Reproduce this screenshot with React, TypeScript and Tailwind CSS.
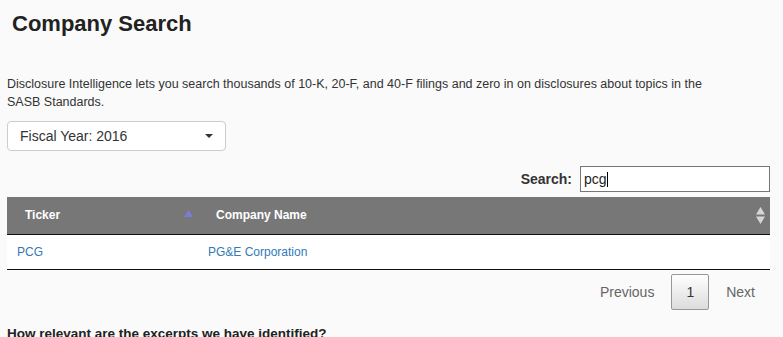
import React from "react";

const SortUp = () => (
  <svg width="9" height="8" viewBox="0 0 9 8" className="block">
    <path d="M4.5 0 L9 7 L0 7 Z" fill="#7b7bd9" />
  </svg>
);

const SortBoth = () => (
  <svg width="9" height="17" viewBox="0 0 9 17" className="block">
    <path d="M4.5 0 L9 7.5 L0 7.5 Z" fill="#d6d6d6" />
    <path d="M0 9.5 L9 9.5 L4.5 17 Z" fill="#d6d6d6" />
  </svg>
);

const App = () => {
  return (
    <div className="min-h-[337px] w-[783px] bg-[#fafafa] pl-[7px] pr-[13px] text-[#333] font-['Liberation_Sans',Arial,sans-serif] overflow-hidden">
      {/* Title */}
      <h1 className="pt-[11px] pl-[5px] text-[22px] leading-[26px] font-bold text-[#222]">
        Company Search
      </h1>

      {/* Intro */}
      <p className="mt-[38px] text-[12.5px] leading-[18px] text-[#333]">
        Disclosure Intelligence lets you search thousands of 10-K, 20-F, and 40-F filings and zero in on disclosures about topics in the
        <br />
        SASB Standards.
      </p>

      {/* Fiscal year dropdown */}
      <div className="mt-[10px] w-[219px] h-[30px] bg-white border border-[#ccc] rounded-[4px] flex items-center justify-between pl-[12px] pr-[12px]">
        <span className="text-[14px] text-[#333]">Fiscal Year: 2016</span>
        <span className="w-0 h-0 border-l-[4px] border-r-[4px] border-t-[4px] border-l-transparent border-r-transparent border-t-[#333]" />
      </div>

      {/* Search */}
      <div className="mt-[15px] flex justify-end items-center gap-[8px]">
        <span className="text-[14px] font-bold text-[#333]">Search:</span>
        <div className="w-[190px] h-[26px] bg-white border border-[#767676] flex items-center px-[3px]">
          <span className="text-[14px] text-[#222]">pcg</span>
          <span className="w-px h-[15px] bg-black" />
        </div>
      </div>

      {/* Table */}
      <table className="mt-[5px] w-full border-collapse text-[12px]">
        <thead>
          <tr className="bg-[#777] text-white h-[37px] border-b border-[#111]">
            <th className="w-[191px] text-left font-bold pl-[18px] pr-[5px]">
              <div className="flex items-center justify-between">
                <span>Ticker</span>
                <span className="-mt-[3px]"><SortUp /></span>
              </div>
            </th>
            <th className="text-left font-bold pl-[18px] pr-[5px]">
              <div className="flex items-center justify-between">
                <span>Company Name</span>
                <SortBoth />
              </div>
            </th>
          </tr>
        </thead>
        <tbody>
          <tr className="bg-white h-[35px] border-b border-[#111]">
            <td className="pl-[10px] text-[#337ab7]">PCG</td>
            <td className="pl-[10px] text-[#337ab7]">PG&amp;E Corporation</td>
          </tr>
        </tbody>
      </table>

      {/* Pagination */}
      <div className="mt-[4px] flex justify-end text-[14px] leading-[20px]">
        <span className="ml-[2px] px-[14px] py-[7px] border border-transparent text-[#666]">Previous</span>
        <span className="ml-[2px] px-[14px] py-[7px] border border-[#979797] rounded-[2px] bg-gradient-to-b from-white to-[#dcdcdc] text-[#333]">1</span>
        <span className="ml-[2px] px-[14px] py-[7px] border border-transparent text-[#666]">Next</span>
      </div>

      {/* Relevance */}
      <h3 className="mt-[14px] text-[13.5px] leading-[20px] font-bold text-[#222]">
        How relevant are the excerpts we have identified?
      </h3>
    </div>
  );
};

export default App;
